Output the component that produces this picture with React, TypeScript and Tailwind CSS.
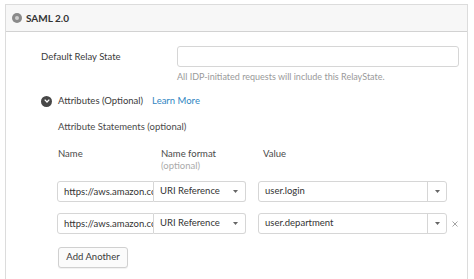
import React from "react";

const font = { fontFamily: "Lato, 'Open Sans', sans-serif" };

const Caret = () => (
  <svg width="5" height="3" viewBox="0 0 5 3" className="fill-[#666]">
    <path d="M0 0h5L2.5 3z" />
  </svg>
);

type Row = { name: string; format: string; value: string; removable?: boolean };

const rows: Row[] = [
  { name: "https://aws.amazon.com/SAML/Attributes/Role", format: "URI Reference", value: "user.login" },
  { name: "https://aws.amazon.com/SAML/Attributes/RoleSessionName", format: "URI Reference", value: "user.department", removable: true },
];

const AttributeRow: React.FC<{ row: Row }> = ({ row }) => (
  <div className="flex items-center h-[21px]">
    <input
      readOnly
      value={row.name}
      className="w-[97px] h-full border border-[#d6d6d6] rounded-l-[3px] bg-white pl-[6px] text-[9.5px] text-[#333] outline-none"
    />
    <div className="w-[92px] h-full border border-l-0 border-[#d6d6d6] rounded-r-[3px] bg-white flex items-center justify-between pl-[6px] pr-[7px]">
      <span className="text-[9.5px] text-[#333]">{row.format}</span>
      <Caret />
    </div>
    <div className="ml-[12px] w-[189px] h-full border border-[#d6d6d6] rounded-[3px] bg-white flex">
      <div className="flex-1 flex items-center pl-[6px]">
        <span className="text-[9.5px] text-[#333]">{row.value}</span>
      </div>
      <div className="w-[19px] border-l border-[#d6d6d6] flex items-center justify-center">
        <Caret />
      </div>
    </div>
    {row.removable && (
      <svg width="6" height="6" viewBox="0 0 6 6" className="ml-[5px]">
        <path d="M0.5 0.5L5.5 5.5M5.5 0.5L0.5 5.5" stroke="#9a9a9a" strokeWidth="0.9" />
      </svg>
    )}
  </div>
);

export default function App() {
  return (
    <div className="w-[474px] h-[279px] bg-white overflow-hidden pt-[4px] pl-[5px]" style={font}>
      <div className="w-[463px] h-[300px] border border-[#dcdcdc] bg-white">
        {/* header */}
        <div className="h-[27px] bg-[#f7f7f7] border-b border-[#d2d2d2] flex items-center pl-[6px] gap-[4px]">
          <div className="w-[10px] h-[10px] rounded-full bg-[#8a8a8a] flex items-center justify-center">
            <div className="w-[4px] h-[4px] rounded-full bg-[#cfcfcf]" />
          </div>
          <span className="text-[10px] leading-[12px] font-bold text-[#333]">SAML 2.0</span>
        </div>

        {/* body */}
        <div className="pl-[35px] pt-[14px]">
          <div className="flex items-center">
            <span className="w-[136px] text-[9.5px] leading-[12px] text-[#3a3a3a]">Default Relay State</span>
            <div className="w-[282px] h-[21px] border border-[#d6d6d6] rounded-[3px] bg-white" />
          </div>
          <p className="ml-[136px] mt-[3px] text-[9px] leading-[13px] text-[#9a9a9a]">
            All IDP-initiated requests will include this RelayState.
          </p>

          <div className="flex items-center mt-[12px] h-[12px]">
            <div className="w-[11px] h-[11px] rounded-full bg-[#474747] flex items-center justify-center">
              <svg width="6" height="4" viewBox="0 0 6 4">
                <path d="M0.7 0.6L3 3L5.3 0.6" stroke="#fff" strokeWidth="1.3" fill="none" />
              </svg>
            </div>
            <span className="ml-[6px] text-[9.5px] leading-[12px] text-[#3a3a3a]">Attributes (Optional)</span>
            <span className="ml-[9px] text-[9.5px] leading-[12px] text-[#2f86c2]">Learn More</span>
          </div>

          <div className="pl-[17px]">
            <p className="mt-[14px] text-[9.5px] leading-[12px] text-[#4a4a4a]">Attribute Statements (optional)</p>

            <div className="flex mt-[15px] text-[9.5px] text-[#4a4a4a] leading-[12px]">
              <span className="w-[103px]">Name</span>
              <div className="w-[102px] flex flex-col">
                <span>Name format</span>
                <span className="text-[#aaa]">(optional)</span>
              </div>
              <span>Value</span>
            </div>

            <div className="ml-[-1px] mt-[9px] flex flex-col gap-[11px]">
              {rows.map((r) => (
                <AttributeRow key={r.name} row={r} />
              ))}
            </div>

            <button className="mt-[13px] h-[21px] w-[70px] border border-[#d0d0d0] rounded-[3px] bg-[#fbfbfb] text-[9.5px] text-[#3a3a3a] shadow-[0_1px_1px_rgba(0,0,0,0.06)]">
              Add Another
            </button>
          </div>
        </div>
      </div>
    </div>
  );
}
